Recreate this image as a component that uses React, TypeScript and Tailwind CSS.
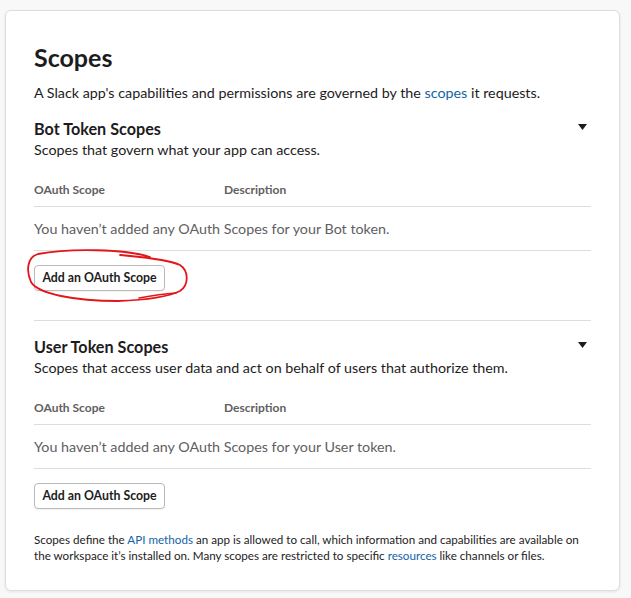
import React from "react"

type SectionProps = {
  title: string,
  subtitle: string,
  token: string,
  titleGap: string,
  annotate?: boolean,
}

function Caret() {
  return (
    <svg width="9" height="6" viewBox="0 0 9 6" className="mt-[5px] mr-[4px]">
      <path d="M0 0 L9 0 L4.5 6 Z" fill="#1d1c1d" />
    </svg>
  )
}

function Annotation() {
  // hand-drawn red loop around the first button
  return (
    <svg
      className="absolute left-[-10px] top-[-19px] pointer-events-none"
      width="170"
      height="60"
      viewBox="24 246 170 60"
      fill="none"
    >
      <path
        d="M150 258 C125 250, 70 249, 38 255 C27 258, 26 272, 31 283 C38 295, 75 302, 118 302 C145 301, 168 298, 180 292 C189 286, 189 272, 180 266 C168 260, 140 258, 120 256"
        stroke="#e3161b"
        strokeWidth="1.8"
        strokeLinecap="round"
      />
      <path d="M139 299 C150 297, 162 295, 176 294" stroke="#e3161b" strokeWidth="1.6" strokeLinecap="round" />
    </svg>
  )
}

function ScopeSection({ title, subtitle, token, titleGap, annotate }: SectionProps) {
  return (
    <div className={titleGap}>
      <div className="flex flex-row items-start justify-between">
        <h3 className="text-[16.2px] leading-[20px] font-bold text-[#1d1c1d]">{title}</h3>
        <Caret />
      </div>
      <p className="text-[14.3px] leading-[22px] text-[#1d1c1d]">{subtitle}</p>

      <div className="mt-[20px] flex flex-row pb-[7px] border-b border-[#dddddd] text-[12px] leading-[18px] font-bold text-[#616061]">
        <div className="w-[190px]">OAuth Scope</div>
        <div>Description</div>
      </div>
      <div className="pt-[11px] pb-[10px] border-b border-[#dddddd] text-[14.3px] leading-[22px] text-[#616061]">
        You haven’t added any OAuth Scopes for your {token} token.
      </div>

      <div className="relative mt-[13px] w-fit">
        <button className="h-[26px] w-[131px] rounded-[4px] border border-[#bbbbbb] bg-white text-[12.3px] font-bold text-[#1d1c1d] shadow-[0_1px_2px_rgba(0,0,0,0.06)]">
          Add an OAuth Scope
        </button>
        {annotate && <Annotation />}
      </div>
    </div>
  )
}

export default function App() {
  return (
    <div className="min-h-[598px] w-[631px] bg-[#f8f8f8] pl-[5px] pt-[10px] font-['Lato','Liberation_Sans',sans-serif]">
      <div className="w-[615px] h-[581px] bg-white border border-[#dddddd] rounded-[6px] shadow-[0_1px_3px_rgba(0,0,0,0.08)] px-[28px] pt-[30px]">
        <h1 className="text-[25px] leading-[32px] font-bold text-[#1d1c1d]">Scopes</h1>
        <p className="mt-[9px] text-[14.3px] leading-[22px] text-[#1d1c1d]">
          A Slack app's capabilities and permissions are governed by the{" "}
          <a className="text-[#1264a3]">scopes</a> it requests.
        </p>

        <ScopeSection
          title="Bot Token Scopes"
          subtitle="Scopes that govern what your app can access."
          token="Bot"
          titleGap="mt-[15px]"
          annotate
        />

        <div className="mt-[29px] border-t border-[#dddddd]" />

        <ScopeSection
          title="User Token Scopes"
          subtitle="Scopes that access user data and act on behalf of users that authorize them."
          token="User"
          titleGap="mt-[16px]"
        />

        <p className="mt-[23px] text-[11.65px] leading-[16px] text-[#1d1c1d]">
          Scopes define the <a className="text-[#1264a3]">API methods</a> an app is allowed to call, which information and capabilities are available on the workspace it’s installed on. Many scopes are restricted to specific{" "}
          <a className="text-[#1264a3]">resources</a> like channels or files.
        </p>
      </div>
    </div>
  )
}
